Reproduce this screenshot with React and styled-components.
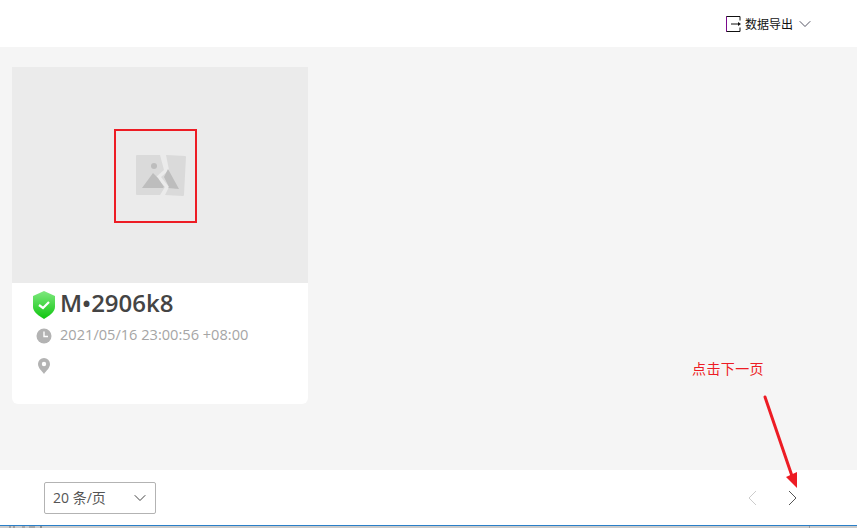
import React from "react"
import styled, { createGlobalStyle } from "styled-components"
import { ChevronDown } from "lucide-react"

const Global = createGlobalStyle`
    html, body {
        margin: 0;
        padding: 0;
    }
    body {
        font-family: "Open Sans", "Noto Sans CJK SC", sans-serif;
        background: #fff;
    }
`

const Page = styled.div`
    width: 857px;
    height: 528px;
    overflow: hidden;
    display: flex;
    flex-direction: column;
    position: relative;
`

const TopBar = styled.div`
    height: 47px;
    flex: none;
    background: #fff;
    display: flex;
    justify-content: flex-end;
    align-items: center;
    padding-right: 42px;
    box-sizing: border-box;
`

const ExportButton = styled.div`
    display: flex;
    align-items: center;
    gap: 3px;
    font-size: 12px;
    color: #111;
    font-family: "Noto Sans CJK SC", sans-serif;
    svg.caret {
        margin-left: -1px;
    }
`

const Content = styled.div`
    flex: 1;
    background: #f5f5f5;
    padding: 20px 12px 0;
`

const Card = styled.div`
    width: 296px;
    height: 337px;
    background: #fff;
    border-radius: 0 0 6px 6px;
    overflow: hidden;
`

const Thumb = styled.div`
    height: 216px;
    background: #ebebeb;
    display: flex;
    align-items: center;
    justify-content: center;
`

const Placeholder = styled.div`
    width: 69px;
    height: 90px;
    margin: 1px 9px 0 0;
    border: 2px solid #ed1c24;
    display: flex;
    align-items: center;
    justify-content: center;
    padding-left: 10px;
`

const CardBody = styled.div`
    padding: 8px 0 0 20px;
`

const Title = styled.div`
    display: flex;
    align-items: center;
    gap: 5px;
    height: 28px;
    padding-left: 1px;
    font-size: 24px;
    font-weight: 600;
    line-height: 28px;
    color: #444;
    span {
        padding-bottom: 4px;
    }
`

const InfoRow = styled.div`
    display: flex;
    align-items: center;
    gap: 8px;
    margin-top: ${(p) => p.$top}px;
    padding-left: 4px;
    height: 20px;
    font-size: 14.6px;
    color: #a5a5a5;
    span {
        padding-bottom: 4px;
    }
`

const Pager = styled.div`
    height: 55px;
    flex: none;
    background: #fff;
    display: flex;
    align-items: center;
    justify-content: space-between;
    padding: 0 59px 0 44px;
    box-sizing: border-box;
`

const PageSize = styled.div`
    width: 112px;
    height: 32px;
    box-sizing: border-box;
    border: 1px solid #b3b3b3;
    border-radius: 2px;
    display: flex;
    align-items: center;
    justify-content: space-between;
    padding: 0 5px 2px 8px;
    font-size: 14px;
    color: #555;
    svg {
        margin-top: 2px;
    }
`

const Arrows = styled.div`
    display: flex;
    gap: 31px;
    align-items: center;
`

const BottomEdge = styled.div`
    height: 3px;
    flex: none;
    box-sizing: border-box;
    border-top: 1px solid #2a7fc8;
    background:
        linear-gradient(#9a9a9a, #9a9a9a) 809px 0 / 1px 100% no-repeat,
        linear-gradient(#a0a0a0, #a0a0a0) 9px 0 / 2px 100% no-repeat,
        linear-gradient(#a0a0a0, #a0a0a0) 13px 0 / 2px 100% no-repeat,
        linear-gradient(#a8a8a8, #a8a8a8) 22px 0 / 3px 100% no-repeat,
        linear-gradient(#a8a8a8, #a8a8a8) 29px 0 / 6px 100% no-repeat,
        linear-gradient(#909090, #909090) 40px 0 / 2px 100% no-repeat,
        #cbcbcb;
`

const Note = styled.div`
    position: absolute;
    left: 692px;
    top: 360px;
    font-size: 14px;
    letter-spacing: 0.4px;
    line-height: 17px;
    color: #ed1c24;
    font-family: "Noto Sans CJK SC", sans-serif;
`

const ArrowMark = styled.svg`
    position: absolute;
    left: 755px;
    top: 390px;
`

const ExportIcon = () => (
    <svg width="16" height="16" viewBox="0 0 16 16" fill="none">
        <path d="M14 4.500V.500H.500v15H14v-4" stroke="#111" />
        <path d="M.500 .500v15" stroke="#7a0a8c" />
        <path d="M5 8h8" stroke="#111" />
        <path d="M12 6l3 2-3 2z" fill="#111" />
    </svg>
)

const BrokenImage = () => (
    <svg width="50" height="42" viewBox="0 0 50 42">
        <path d="M1 0h23l4 15-8 7 9 10-5 8H1a1 1 0 0 1-1-1V1a1 1 0 0 1 1-1z" fill="#dadada" />
        <path d="M30 0l19 1a1 1 0 0 1 1 1l-2 38a1 1 0 0 1-1 1l-18-1 4-8-8-10 8-7z" fill="#dadada" />
        <circle cx="18" cy="11" r="3" fill="#bdbdbd" />
        <path d="M6 33l11-15 5 5 6 9-1 1z" fill="#bdbdbd" />
        <path d="M28 22l4-8 11 20-11-1 1-1z" fill="#bdbdbd" />
    </svg>
)

const ShieldIcon = () => (
    <svg width="22" height="28" viewBox="0 0 22 28" style={{ flex: "none" }}>
        <defs>
            <linearGradient id="shield" x1="0" y1="0" x2="0" y2="1">
                <stop offset="0" stopColor="#7fe87f" />
                <stop offset="1" stopColor="#0fc60f" />
            </linearGradient>
        </defs>
        <path d="M11 0l11 5v11c0 5-6 9-11 12C6 25 0 21 0 16V5z" fill="url(#shield)" />
        <path d="M6 14l4 3 6-6" fill="none" stroke="#fff" strokeWidth="2.200" />
    </svg>
)

const ClockIcon = () => (
    <svg width="16" height="16" viewBox="0 0 16 16" style={{ flex: "none" }}>
        <circle cx="8" cy="8" r="7.500" fill="#b3b3b3" />
        <path d="M8 3.500V8.500H12" fill="none" stroke="#fff" strokeWidth="1.400" />
    </svg>
)

const PinIcon = () => (
    <svg width="16" height="16" viewBox="0 0 16 16" style={{ flex: "none" }}>
        <path d="M8 0a6 6 0 0 1 6 6c0 4-4 7-6 10C6 13 2 10 2 6a6 6 0 0 1 6-6z" fill="#b3b3b3" />
        <circle cx="8" cy="6" r="2.200" fill="#fff" />
    </svg>
)

const PagerArrow = ({ d, color }) => (
    <svg width="10" height="16" viewBox="0 0 10 16" fill="none">
        <path d={d} stroke={color} />
    </svg>
)

const App = () => {
    return (
        <Page>
            <Global />
            <TopBar>
                <ExportButton>
                    <ExportIcon />
                    <span>数据导出</span>
                    <ChevronDown className="caret" size={20} strokeWidth={1} color="#334" />
                </ExportButton>
            </TopBar>
            <Content>
                <Card>
                    <Thumb>
                        <Placeholder>
                            <BrokenImage />
                        </Placeholder>
                    </Thumb>
                    <CardBody>
                        <Title>
                            <ShieldIcon />
                            <span>M•2906k8</span>
                        </Title>
                        <InfoRow $top={7}>
                            <ClockIcon />
                            <span>2021/05/16 23:00:56 +08:00</span>
                        </InfoRow>
                        <InfoRow $top={10}>
                            <PinIcon />
                        </InfoRow>
                    </CardBody>
                </Card>
            </Content>
            <Pager>
                <PageSize>
                    <span>20 条/页</span>
                    <ChevronDown size={20} strokeWidth={1.200} color="#444" />
                </PageSize>
                <Arrows>
                    <PagerArrow d="M9 1L2 8l7 7" color="#ccc" />
                    <PagerArrow d="M1 1l7 7-7 7" color="#555" />
                </Arrows>
            </Pager>
            <BottomEdge />
            <Note>点击下一页</Note>
            <ArrowMark width="50" height="100" viewBox="0 0 50 100">
                <path d="M10 7L37 86" stroke="#ed1c24" strokeWidth="3" strokeLinecap="round" />
                <path d="M42 98L31 87 42 82z" fill="#ed1c24" />
            </ArrowMark>
        </Page>
    )
}

export default App
